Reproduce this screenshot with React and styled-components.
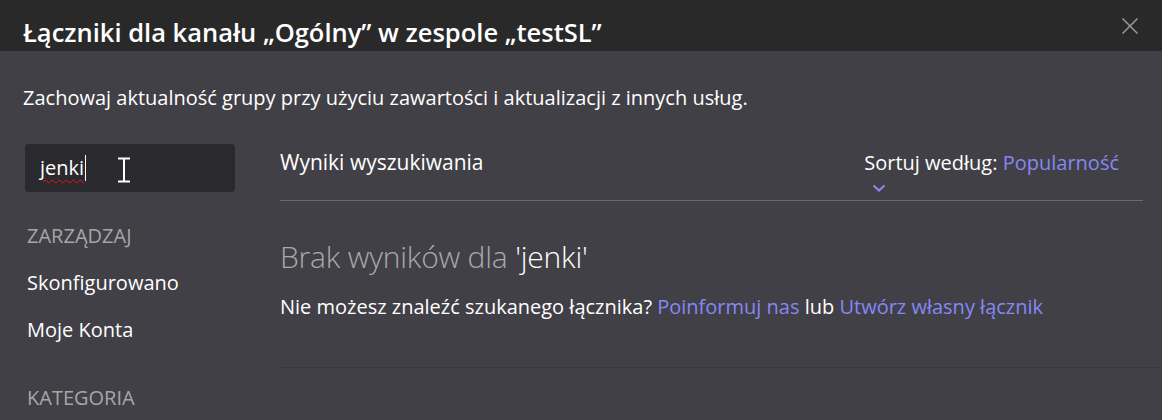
import React from "react";
import styled, { createGlobalStyle } from "styled-components";

const GlobalStyle = createGlobalStyle`
    html, body {
        margin: 0;
        padding: 0;
        background-color: #414046;
        font-family: "Open Sans", "Noto Sans", sans-serif;
        color: #fff;
    }
`;

const Dialog = styled.div`
    width: 1162px;
    height: 420px;
    overflow: hidden;
    background-color: #414046;
`;

const Header = styled.div`
    height: 51px;
    background-color: #29292a;
    display: flex;
    align-items: center;
    justify-content: space-between;
    padding: 0 24px 0 23px;
    box-sizing: border-box;
`;

const Title = styled.h1`
    margin: 0;
    padding-top: 12px;
    font-size: 25.5px;
    line-height: 32px;
    font-weight: 600;
    color: #fff;
`;

const CloseButton = styled.button`
    background: none;
    border: none;
    padding: 0;
    width: 16px;
    height: 16px;
    cursor: pointer;
    svg {
        display: block;
    }
`;

const Description = styled.p`
    margin: 33px 0 0 23px;
    font-size: 20px;
    line-height: 27px;
`;

const Columns = styled.div`
    display: flex;
    margin-top: 33px;
`;

const Sidebar = styled.div`
    width: 210px;
    margin-left: 25px;
    flex-shrink: 0;
`;

const SearchBox = styled.div`
    height: 48px;
    background-color: #2a292e;
    border-radius: 4px;
    display: flex;
    align-items: center;
    padding-left: 15px;
    position: relative;
`;

const SearchText = styled.span`
    font-size: 20px;
    text-decoration: underline wavy #e81123;
    text-decoration-thickness: 1px;
    text-underline-offset: 4px;
    border-right: 1.5px solid #fff;
    padding-right: 1px;
    line-height: 26px;
`;

const MouseCursor = styled.svg`
    position: absolute;
    left: 92px;
    top: 13px;
`;

const SectionLabel = styled.div`
    font-size: 20px;
    line-height: 27px;
    color: #a6a6a8;
    text-transform: uppercase;
    margin: ${(p) => p.$top}px 0 0 2px;
`;

const NavItem = styled.div`
    font-size: 20px;
    line-height: 27px;
    margin: ${(p) => p.$top}px 0 0 2px;
`;

const Main = styled.div`
    flex: 1;
    margin-left: 45px;
`;

const ResultsHead = styled.div`
    display: flex;
    justify-content: space-between;
    align-items: flex-start;
    margin-right: 19px;
    border-bottom: 1px solid #6b6a70;
    height: 57px;
    padding-top: 5px;
    box-sizing: border-box;
`;

const HeadTitle = styled.div`
    font-size: 21px;
    line-height: 27px;
`;

const Sort = styled.div`
    margin-right: 24px;
    font-size: 20px;
    line-height: 27px;
`;

const Link = styled.a`
    color: #8588f4;
    text-decoration: none;
    cursor: pointer;
`;

const Chevron = styled.svg`
    display: block;
    margin: 8px 0 0 8px;
`;

const Empty = styled.div`
    border-bottom: 1px solid #38373c;
    height: 167px;
    padding-top: 37px;
    box-sizing: border-box;
`;

const EmptyTitle = styled.h2`
    margin: 0;
    font-size: 30px;
    font-weight: 300;
    color: #a9a9ab;
    letter-spacing: -0.2px;
    line-height: 38px;
    span {
        color: #fff;
    }
`;

const EmptyText = styled.p`
    margin: 17px 0 0;
    font-size: 20px;
    line-height: 27px;
`;

const App = () => {
    return (
        <Dialog>
            <GlobalStyle />
            <Header>
                <Title>Łączniki dla kanału „Ogólny” w zespole „testSL”</Title>
                <CloseButton aria-label="Zamknij">
                    <svg width="16" height="16" viewBox="0 0 16 16">
                        <path d="M0.5 0.5 L15.5 15.5 M15.5 0.5 L0.5 15.5" stroke="#9a9a9a" strokeWidth="1.5" />
                    </svg>
                </CloseButton>
            </Header>
            <Description>
                Zachowaj aktualność grupy przy użyciu zawartości i aktualizacji z innych usług.
            </Description>
            <Columns>
                <Sidebar>
                    <SearchBox>
                        <SearchText>jenki</SearchText>
                        <MouseCursor width="14" height="26" viewBox="0 0 14 26">
                            <path d="M1 1.5 H13 M7 1.5 V24.5 M1 24.5 H13" stroke="#fff" strokeWidth="2" fill="none" />
                        </MouseCursor>
                    </SearchBox>
                    <SectionLabel $top={30}>Zarządzaj</SectionLabel>
                    <NavItem $top={20}>Skonfigurowano</NavItem>
                    <NavItem $top={20}>Moje Konta</NavItem>
                    <SectionLabel $top={41}>Kategoria</SectionLabel>
                </Sidebar>
                <Main>
                    <ResultsHead>
                        <HeadTitle>Wyniki wyszukiwania</HeadTitle>
                        <Sort>
                            Sortuj według: <Link>Popularność</Link>
                            <Chevron width="14" height="8" viewBox="0 0 14 8">
                                <path d="M1.5 1.5 L7 6.5 L12.5 1.5" stroke="#8588f4" strokeWidth="2.2" fill="none" />
                            </Chevron>
                        </Sort>
                    </ResultsHead>
                    <Empty>
                        <EmptyTitle>
                            Brak wyników dla <span>'jenki'</span>
                        </EmptyTitle>
                        <EmptyText>
                            Nie możesz znaleźć szukanego łącznika? <Link>Poinformuj nas</Link> lub{" "}
                            <Link>Utwórz własny łącznik</Link>
                        </EmptyText>
                    </Empty>
                </Main>
            </Columns>
        </Dialog>
    );
};

export default App;
